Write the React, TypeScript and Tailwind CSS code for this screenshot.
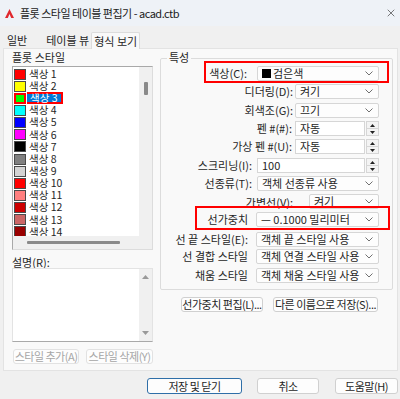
import { X } from 'lucide-react';

const swatches = [
  '#ff0000', '#ffff00', '#00ff00', '#00ffff', '#0000ff', '#ff00ff', '#000000',
  '#808080', '#d3d3d3', '#ff0000', '#ff7f7f', '#cc0000', '#cc6666', '#990000',
];

const Chevron = () => (
  <svg width="8" height="5" viewBox="0 0 8 5" className="shrink-0">
    <path d="M0.5 0.5 L4 4 L7.5 0.5" fill="none" stroke="#707070" strokeWidth="1" />
  </svg>
);

const Select = ({ value, className }: { value: string; className: string }) => (
  <div
    className={`flex items-center justify-between h-[15px] bg-[#fdfdfd] border border-[#d6d6d6] rounded-[2px] pl-[4px] pr-[5px] ${className}`}
  >
    <span className="block text-[11px] leading-none whitespace-nowrap text-[#262626]">{value}</span>
    <Chevron />
  </div>
);

const Spin = ({ value, className }: { value: string; className: string }) => (
  <div className="flex h-[15px]">
    <div
      className={`flex items-center h-[15px] bg-white border border-[#d6d6d6] pl-[4px] ${className}`}
    >
      <span className="block text-[11px] leading-none text-[#262626]">{value}</span>
    </div>
    <div className="ml-[1px] w-[13px] flex flex-col border border-[#d6d6d6] bg-[#f4f4f4]">
      <div className="flex-1 flex items-center justify-center">
        <svg width="5" height="3" viewBox="0 0 5 3"><path d="M0 3 L2.5 0 L5 3Z" fill="#222" /></svg>
      </div>
      <div className="h-px bg-[#d6d6d6]" />
      <div className="flex-1 flex items-center justify-center">
        <svg width="5" height="3" viewBox="0 0 5 3"><path d="M0 0 L2.5 3 L5 0Z" fill="#222" /></svg>
      </div>
    </div>
  </div>
);

const Label = ({ text, className }: { text: string; className: string }) => (
  <div className={`flex items-center justify-end h-[15px] shrink-0 ${className}`}>
    <span className="block text-[11px] leading-none whitespace-nowrap text-[#262626]">{text}</span>
  </div>
);

const Btn = ({
  text,
  className,
  disabled,
}: {
  text: string;
  className: string;
  disabled?: boolean;
}) => (
  <div
    className={`flex items-center justify-center overflow-hidden rounded-[3px] border bg-[#fdfdfd] ${
      disabled ? 'border-[#e2e2e2] text-[#a6a6a6]' : 'border-[#d0d0d0] text-[#262626]'
    } ${className}`}
  >
    <span className="block text-[11px] leading-none whitespace-nowrap tracking-[-0.5px]">{text}</span>
  </div>
);

export default function App() {
  return (
    <div className="w-[400px] h-[399px] overflow-hidden bg-[#f0f0f0] font-['Noto_Sans_CJK_KR',sans-serif] select-none">
      {/* title bar */}
      <div className="h-[26px] bg-[#eef2f7] flex items-center pl-[5px] pr-[3px]">
        <svg width="9" height="9" viewBox="0 0 9 9" className="shrink-0">
          <path d="M4.5 0 L9 9 L6.2 9 L4.5 5 L2.8 9 L0 9Z" fill="#e0282e" />
        </svg>
        <span className="block ml-[6px] text-[11px] leading-none text-[#1b1b1b] tracking-[-0.5px]">
          플롯 스타일 테이블 편집기 - acad.ctb
        </span>
        <X size={12} strokeWidth={1.3} className="ml-auto text-[#333]" />
      </div>

      {/* tabs */}
      <div className="h-[22px] flex items-end pl-[7px]">
        <div className="h-[16px] flex items-center text-[11px] leading-none text-[#262626]">일반</div>
        <div className="h-[16px] ml-[19px] flex items-center text-[11px] leading-none text-[#262626]">
          테이블 뷰
        </div>
        <div className="h-[17px] ml-[2px] w-[49px] -mb-px flex items-center justify-center bg-[#f9f9f9] border border-b-0 border-[#dcdcdc] rounded-t-[2px] text-[11px] leading-none text-[#262626] z-10">
          형식 보기
        </div>
      </div>

      {/* panel */}
      <div className="ml-[3px] w-[395px] h-[323px] bg-[#f9f9f9] border border-[#e3e3e3] flex items-start">
        {/* left column */}
        <div className="ml-[8px] w-[141px] pt-[2px] flex flex-col">
          <div className="h-[12px] flex items-center text-[11px] leading-none text-[#262626]">플롯 스타일</div>
          <div className="mt-[3px] h-[184px] bg-white border border-[#a9a9a9] border-r-[#dcdcdc] border-b-[#dcdcdc] flex flex-col">
            <div className="flex flex-1 min-h-0">
              <div className="flex-1 overflow-hidden pt-[1px]">
                {swatches.map((c, i) => (
                  <div key={i} className="h-[12.15px] flex items-center pl-[1px]">
                    <div
                      className={`w-[12px] h-[11px] border ${
                        i === 2 ? 'border-[#ff0000] border-2' : 'border-[#4a4a4a]'
                      }`}
                      style={{ backgroundColor: c }}
                    />
                    {i === 2 ? (
                      <div className="ml-[1px] h-[12px] px-[2px] flex items-center bg-[#0078d7] border-y-2 border-r-2 border-[#ff0000]">
                        <span className="block text-[10.5px] leading-none text-white px-[1px]">색상 3</span>
                      </div>
                    ) : (
                      <span className="block ml-[3px] text-[10.5px] leading-none text-[#262626]">
                        색상 {i + 1}
                      </span>
                    )}
                  </div>
                ))}
              </div>
              <div className="w-[13px] bg-[#f0f0f0] flex justify-center pt-[15px]">
                <div className="w-[4px] h-[13px] bg-[#8a8a8a] rounded-[1px]" />
              </div>
            </div>
            <div className="h-[13px] bg-[#f0f0f0] flex items-center pl-[14px]">
              <div className="w-[93px] h-[3px] bg-[#8a8a8a] rounded-[1px]" />
            </div>
          </div>
          <div className="mt-[6px] h-[12px] flex items-center text-[11px] leading-none text-[#262626]">설명(R):</div>
          <div className="h-[74px] bg-white border border-[#e3e3e3] border-b-[#a9a9a9] flex justify-end">
            <div className="w-[13px] bg-[#f0f0f0] flex flex-col items-center justify-between py-[6px]">
              <svg width="7" height="4" viewBox="0 0 7 4"><path d="M0 4 L3.5 0 L7 4Z" fill="#999" /></svg>
              <svg width="7" height="4" viewBox="0 0 7 4"><path d="M0 0 L3.5 4 L7 0Z" fill="#999" /></svg>
            </div>
          </div>
          <div className="mt-[7px] flex">
            <Btn text="스타일 추가(A)" disabled className="ml-[1px] w-[69px] h-[15px]" />
            <Btn text="스타일 삭제(Y)" disabled className="ml-[7px] w-[70px] h-[15px]" />
          </div>
        </div>

        {/* right column */}
        <div className="ml-[7px] flex flex-col">
          <div className="relative mt-[9px] w-[233px] h-[232px] border border-[#dcdcdc] rounded-[2px] flex flex-col">
            <div className="absolute left-[6px] -top-[7px] px-[2px] bg-[#f9f9f9] text-[11px] leading-none text-[#262626]">
              특성
            </div>

            <div className="mt-[2px] ml-[43px] w-[185px] h-[22px] border-2 border-[#ff0000] pt-[3px] flex items-start">
              <Label text="색상(C):" className="w-[41px]" />
              <div className="ml-[10px] w-[122px] flex items-center justify-between h-[15px] bg-[#fdfdfd] border border-[#d6d6d6] rounded-[2px] pl-[4px] pr-[5px]">
                <div className="flex items-center">
                  <div className="w-[9px] h-[9px] bg-black mr-[2px]" />
                  <span className="block text-[11px] leading-none text-[#262626]">검은색</span>
                </div>
                <Chevron />
              </div>
            </div>

            <div className="mt-[1px] flex">
              <Label text="디더링(D):" className="w-[132px]" />
              <Select value="켜기" className="ml-[2px] w-[84px]" />
            </div>
            <div className="mt-[4px] flex">
              <Label text="회색조(G):" className="w-[132px]" />
              <Select value="끄기" className="ml-[2px] w-[84px]" />
            </div>
            <div className="mt-[3px] flex">
              <Label text="펜 #(#):" className="w-[131px]" />
              <div className="ml-[3px]">
                <Spin value="자동" className="w-[70px]" />
              </div>
            </div>
            <div className="mt-[3px] flex">
              <Label text="가상 펜 #(U):" className="w-[131px]" />
              <div className="ml-[3px]">
                <Spin value="자동" className="w-[70px]" />
              </div>
            </div>
            <div className="mt-[4px] flex">
              <Label text="스크리닝(I):" className="w-[91px]" />
              <div className="ml-[5px]">
                <Spin value="100" className="w-[108px]" />
              </div>
            </div>
            <div className="mt-[3px] flex">
              <Label text="선종류(T):" className="w-[91px]" />
              <Select value="객체 선종류 사용" className="ml-[5px] w-[122px]" />
            </div>
            <div className="mt-[3px] flex">
              <div className="w-[132px] h-[15px] flex justify-end items-end">
                <div className="h-[11px] overflow-hidden flex items-end">
                  <span className="block text-[11px] leading-[13px] whitespace-nowrap text-[#262626]">가변선(V):</span>
                </div>
              </div>
              <Select value="켜기" className="ml-[16px] w-[70px]" />
            </div>

            <div className="-mt-[3px] ml-[34px] w-[195px] h-[24px] border-2 border-[#ff0000] pt-[4px] flex items-start z-10">
              <Label text="선가중치" className="w-[51px]" />
              <Select value="— 0.1000 밀리미터" className="ml-[8px] w-[123px]" />
            </div>

            <div className="mt-[2px] flex">
              <Label text="선 끝 스타일(E):" className="w-[87px]" />
              <Select value="객체 끝 스타일 사용" className="ml-[8px] w-[123px]" />
            </div>
            <div className="mt-[2px] flex">
              <Label text="선 결합 스타일" className="w-[87px]" />
              <Select value="객체 연결 스타일 사용" className="ml-[8px] w-[123px]" />
            </div>
            <div className="mt-[4px] flex">
              <Label text="채움 스타일" className="w-[87px]" />
              <Select value="객체 채움 스타일 사용" className="ml-[8px] w-[123px]" />
            </div>
          </div>

          <div className="mt-[7px] flex">
            <Btn text="선가중치 편집(L)..." className="ml-[21px] w-[82px] h-[15px]" />
            <Btn text="다른 이름으로 저장(S)..." className="ml-[10px] w-[105px] h-[15px]" />
          </div>
        </div>
      </div>

      {/* bottom buttons */}
      <div className="mt-[7px] flex">
        <Btn text="저장 및 닫기" className="ml-[147px] w-[95px] h-[16px] !border-[#2f6fa8]" />
        <Btn text="취소" className="ml-[15px] w-[62px] h-[16px]" />
        <Btn text="도움말(H)" className="ml-[16px] w-[63px] h-[16px]" />
      </div>
    </div>
  );
}
